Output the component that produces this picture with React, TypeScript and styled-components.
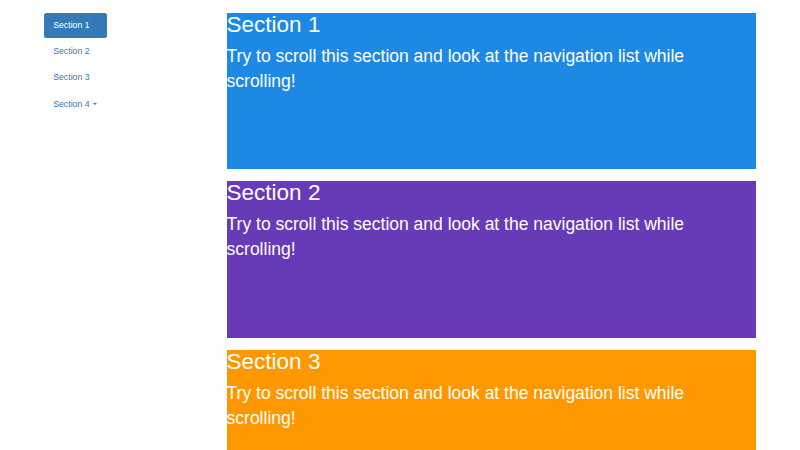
import React from "react";
import styled, { createGlobalStyle } from "styled-components";

const sections = [
  { id: 1, color: "#1e88e5" },
  { id: 2, color: "#673ab7" },
  { id: 3, color: "#ff9800" },
];

const navItems = ["Section 1", "Section 2", "Section 3"];

export default function App() {
  return (
    <>
      <GlobalStyle />
      <Container>
        <SideCol>
          <NavPills>
            {navItems.map((label, i) => (
              <NavItem key={label}>
                <NavLink $active={i === 0}>{label}</NavLink>
              </NavItem>
            ))}
            <NavItem>
              <NavLink>
                Section 4 <Caret />
              </NavLink>
            </NavItem>
          </NavPills>
        </SideCol>
        <MainCol>
          {sections.map((s) => (
            <Section key={s.id} $bg={s.color}>
              <Heading>Section {s.id}</Heading>
              <Text>
                Try to scroll this section and look at the navigation list while
                scrolling!
              </Text>
            </Section>
          ))}
        </MainCol>
      </Container>
    </>
  );
}

const GlobalStyle = createGlobalStyle`
  * { box-sizing: border-box; }
  html, body {
    margin: 0;
    height: 450px;
    overflow: hidden;
    background: #fff;
    font-family: "Liberation Sans", Arial, sans-serif;
    color: #333;
  }
`;

const Container = styled.div`
  display: grid;
  grid-template-columns: 182.8125px 548.4375px;
  height: 450px;
  overflow: hidden;
  padding: 12.5px 34.375px 0;
`;

const SideCol = styled.div`
  padding: 0 9.375px;
`;

const MainCol = styled.div`
  padding: 0 9.375px;
  min-height: 0;
  overflow: hidden;
`;

const NavPills = styled.ul`
  display: inline-flex;
  flex-direction: column;
  gap: 1.25px;
  list-style: none;
  margin: 0;
  padding: 0;
`;

const NavItem = styled.li`
  display: block;
`;

const NavLink = styled.a<{ $active?: boolean }>`
  display: block;
  padding: 6.25px 9.375px;
  font-size: 8.75px;
  line-height: 12.5px;
  border-radius: 2.5px;
  color: ${(p) => (p.$active ? "#fff" : "#337ab7")};
  background: ${(p) => (p.$active ? "#337ab7" : "transparent")};
  cursor: pointer;
  white-space: nowrap;
`;

const Caret = styled.span`
  display: inline-block;
  width: 0;
  height: 0;
  margin-left: 1.25px;
  vertical-align: middle;
  border-top: 2.5px solid;
  border-left: 2.5px solid transparent;
  border-right: 2.5px solid transparent;
`;

const Section = styled.div<{ $bg: string }>`
  height: 156.25px;
  margin-bottom: 12.5px;
  background: ${(p) => p.$bg};
  color: #fff;
`;

const Heading = styled.h1`
  margin: 0 0 6.25px;
  font-size: 22.5px;
  font-weight: 500;
  line-height: 1.1;
`;

const Text = styled.p`
  margin: 0;
  font-size: 17.5px;
  line-height: 25px;
`;
